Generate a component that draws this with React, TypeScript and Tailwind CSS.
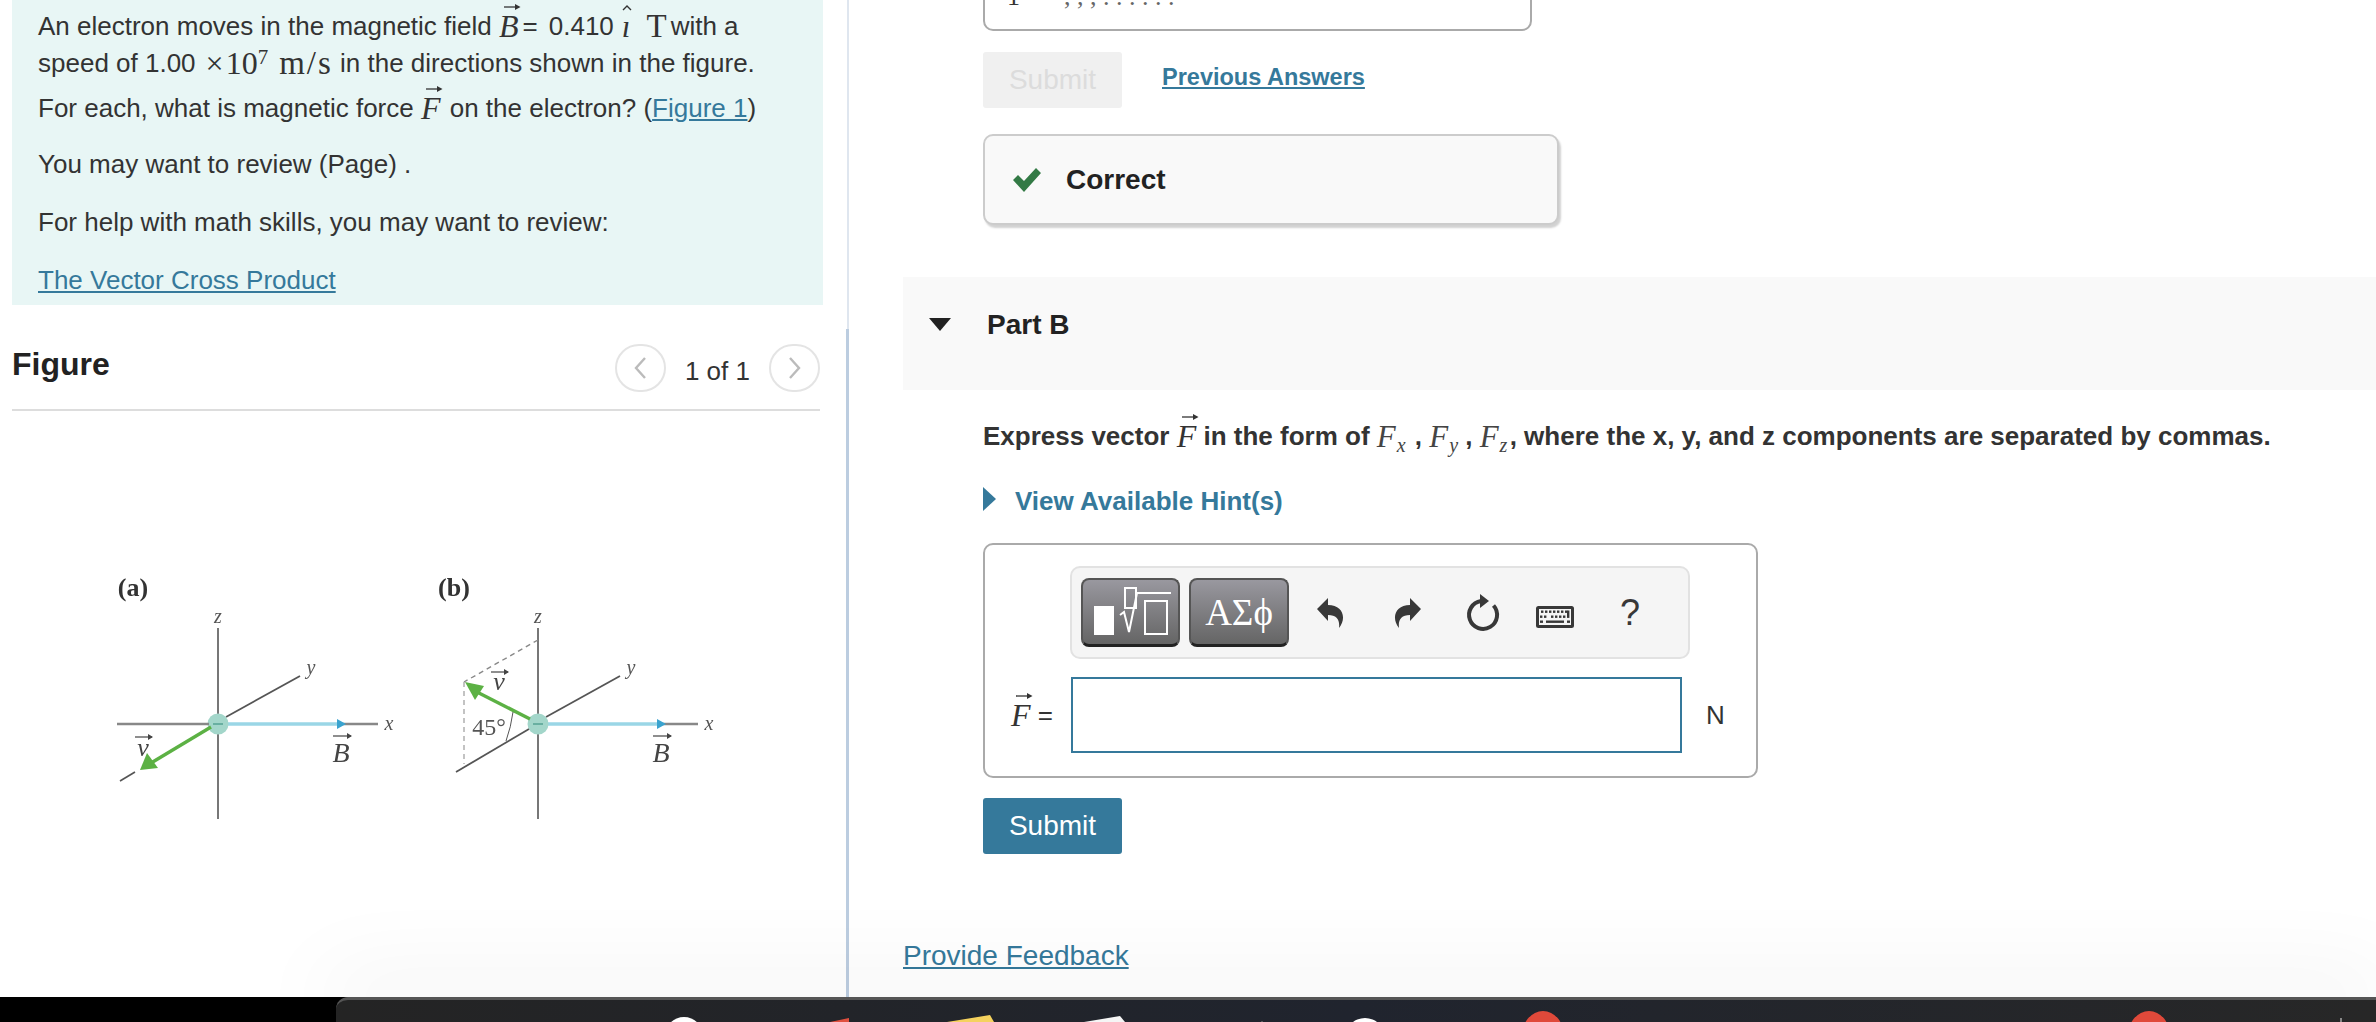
import React from "react";

const serif = "font-['Liberation_Serif',serif]";

const Arrow = ({ className }: { className: string }) => (
  <svg width="17" height="8" viewBox="0 0 17 8" className={`absolute ${className}`}>
    <path d="M0 4 H13" stroke="#333" strokeWidth="1.3" />
    <path d="M11 1 L16.5 4 L11 7 Z" fill="#333" />
  </svg>
);

const Vec = ({ children }: { children: React.ReactNode }) => (
  <span className={`relative inline-block italic ${serif} text-[32px] font-normal leading-none`}>
    {children}
    <Arrow className="left-[5px] top-[-7px]" />
  </span>
);

const Sub = ({ letter, w }: { letter: string; w: string }) => (
  <span className={`${w} inline-block italic font-normal ${serif} text-[31px] leading-none text-[#444]`}>
    F<sub className="ml-[1px] text-[20px]">{letter}</sub>
  </span>
);

const Line = ({ h, children }: { h: string; children: React.ReactNode }) => (
  <div className={`${h} flex items-center whitespace-pre`}>{children}</div>
);

const Scene = ({ dx, left }: { dx: number; left: boolean }) => (
  <g transform={`translate(${dx} 0)`}>
    <line x1="139" y1="79" x2="139" y2="270" stroke="#555" strokeWidth="1.6" />
    <text x="139" y="74" textAnchor="middle" fontFamily="Liberation Serif" fontStyle="italic" fontSize="20" fill="#555">z</text>
    <text x="310" y="181" textAnchor="middle" fontFamily="Liberation Serif" fontStyle="italic" fontSize="20" fill="#555">x</text>
    <text x="232" y="125" textAnchor="middle" fontFamily="Liberation Serif" fontStyle="italic" fontSize="20" fill="#555">y</text>
    <line x1="147" y1="168" x2="221" y2="127" stroke="#555" strokeWidth="1.8" />
    <line x1="262" y1="175" x2="299" y2="175" stroke="#888" strokeWidth="2.4" />
    <line x1="147" y1="175" x2="262" y2="175" stroke="#9ad6e6" strokeWidth="3.4" />
    <polygon points="258,170 267,175 258,180" fill="#3aa3cf" />
    <ellipse cx="139" cy="175" rx="10.5" ry="10.5" fill="#a3d6ca" />
    <line x1="134" y1="175" x2="144" y2="175" stroke="#5aa596" strokeWidth="1.6" />
    <text x="262" y="213" textAnchor="middle" fontFamily="Liberation Serif" fontStyle="italic" fontSize="28" fill="#444">B</text>
    <line x1="254" y1="187" x2="272" y2="187" stroke="#444" strokeWidth="1.2" />
    <polygon points="268,184 273,187 268,190" fill="#444" />
    {left && (
      <>
        <line x1="38" y1="175" x2="130" y2="175" stroke="#888" strokeWidth="2.6" />
        <line x1="132" y1="178" x2="72" y2="214" stroke="#5cb144" strokeWidth="3.4" />
        <polygon points="61,221 68,204 79,219" fill="#5cb144" />
        <line x1="56" y1="223" x2="41" y2="232" stroke="#555" strokeWidth="1.6" />
        <text x="64" y="207" textAnchor="middle" fontFamily="Liberation Serif" fontStyle="italic" fontSize="26" fill="#444">v</text>
        <line x1="56" y1="188" x2="73" y2="188" stroke="#444" strokeWidth="1.2" />
        <polygon points="69,185 74,188 69,191" fill="#444" />
      </>
    )}
    {!left && (
      <>
        <line x1="57" y1="223" x2="130" y2="180" stroke="#555" strokeWidth="1.8" />
        <line x1="139" y1="91" x2="65" y2="133" stroke="#888" strokeWidth="1.4" strokeDasharray="5 4" />
        <line x1="65" y1="133" x2="65" y2="215" stroke="#aaa" strokeWidth="1.4" strokeDasharray="5 4" />
        <line x1="131" y1="170" x2="76" y2="142" stroke="#5cb144" strokeWidth="3.4" />
        <polygon points="66,133 85,137 76,151" fill="#5cb144" />
        <path d="M114 163 Q112 178 107 192" fill="none" stroke="#555" strokeWidth="1" />
        <text x="90" y="186" textAnchor="middle" fontFamily="Liberation Serif" fontSize="24" fill="#555">45°</text>
        <text x="100" y="141" textAnchor="middle" fontFamily="Liberation Serif" fontStyle="italic" fontSize="26" fill="#444">v</text>
        <line x1="92" y1="123" x2="109" y2="123" stroke="#444" strokeWidth="1.2" />
        <polygon points="105,120 110,123 105,126" fill="#444" />
      </>
    )}
  </g>
);

const Figure = () => (
  <svg width="680" height="300" viewBox="0 0 680 300" className="ml-[79px] mt-[138px] blur-[0.5px]">
    <text x="54" y="47" textAnchor="middle" fontFamily="Liberation Serif" fontWeight="bold" fontSize="26" fill="#333">(a)</text>
    <text x="375" y="47" textAnchor="middle" fontFamily="Liberation Serif" fontWeight="bold" fontSize="26" fill="#333">(b)</text>
    <Scene dx={0} left />
    <Scene dx={320} left={false} />
  </svg>
);

const Pager = ({ dir }: { dir: "l" | "r" }) => (
  <span className="flex h-[48px] w-[51px] items-center justify-center rounded-full border-2 border-[#e4e4e4]">
    <svg width="14" height="24" viewBox="0 0 14 24" fill="none" stroke="#bbb" strokeWidth="2.4">
      <path d={dir === "l" ? "M12 2 L3 12 L12 22" : "M2 2 L11 12 L2 22"} />
    </svg>
  </span>
);

const Reply = ({ flip }: { flip?: boolean }) => (
  <svg width="30" height="34" viewBox="0 0 30 34" fill="#383838" className={flip ? "-scale-x-100" : ""}>
    <path d="M2 13 L13 2 L13 9 C28 9 32 22 24 32 C25 24 22 19 13 19 L13 25 Z" />
  </svg>
);

const Keyboard = () => (
  <svg width="40" height="24" viewBox="0 0 40 24">
    <rect x="1" y="1" width="38" height="22" rx="2.5" fill="#383838" />
    <rect x="4" y="4" width="32" height="16" fill="#f5f5f5" />
    {[6, 10, 14, 18, 22, 26, 30].map((x) => (
      <rect key={x} x={x} y="5.5" width="2.4" height="2.4" fill="#383838" />
    ))}
    {[5, 9, 16, 20, 24, 28].map((x) => (
      <rect key={x} x={x} y="10.5" width="2.4" height="2.4" fill="#383838" />
    ))}
    <rect x="32" y="5.5" width="2.4" height="7.4" fill="#383838" />
    <rect x="5" y="15.5" width="3" height="2.4" fill="#383838" />
    <rect x="11" y="15.5" width="18" height="2.4" fill="#383838" />
    <rect x="32" y="15.5" width="3" height="2.4" fill="#383838" />
  </svg>
);

const ToolButton = ({ w, children }: { w: string; children: React.ReactNode }) => (
  <div className={`${w} flex h-[69px] items-center justify-center rounded-[8px] border-2 border-[#555] border-b-[3px] border-b-[#222] bg-gradient-to-b from-[#99989f] to-[#656565]`}>
    {children}
  </div>
);

const Toolbar = () => (
  <div className="flex h-[93px] w-[620px] items-center rounded-[10px] border-2 border-[#e2e2e2] bg-[#f5f5f5] pl-[9px]">
    <ToolButton w="w-[99px]">
      <svg width="80" height="50" viewBox="0 0 80 50" fill="none" stroke="#fff" strokeWidth="2" className="ml-[4px]">
        <rect x="1" y="19" width="20" height="29" fill="#fff" stroke="none" />
        <rect x="32" y="1" width="11" height="20" />
        <path d="M27 28 L31 25 L36 45 L44 6 L78 6" />
        <rect x="52" y="14" width="22" height="33" />
      </svg>
    </ToolButton>
    <div className="ml-[9px]">
      <ToolButton w="w-[100px]">
        <span className={`${serif} text-[37px] leading-none text-white`}>ΑΣϕ</span>
      </ToolButton>
    </div>
    <div className="ml-[26px]"><Reply /></div>
    <div className="ml-[48px]"><Reply flip /></div>
    <svg width="36" height="40" viewBox="0 0 36 40" fill="none" className="ml-[42px]">
      <path d="M28.5 12.5 A14 14 0 1 1 16 8" stroke="#383838" strokeWidth="4" />
      <polygon points="15,1 24,8 15,15" fill="#383838" />
    </svg>
    <div className="ml-[34px] mt-[8px]"><Keyboard /></div>
    <span className="ml-[45px] text-[36px] leading-none text-[#383838]">?</span>
  </div>
);

const SubmitButton = ({ disabled }: { disabled?: boolean }) => (
  <button
    className={`h-[56px] w-[139px] rounded-[3px] text-[28px] ${
      disabled ? "bg-[#f0f0f0] text-[#dcdcdc]" : "bg-[#35799b] text-white"
    }`}
  >
    Submit
  </button>
);

const Dock = () => (
  <div className="absolute bottom-0 left-0 h-[25px] w-full overflow-hidden bg-black">
    <div className="ml-[336px] h-full rounded-tl-[12px] border-t-[3px] border-[#555] bg-gradient-to-r from-[#242424] via-[#20242e] to-[#272727]" />
    <svg className="absolute left-0 top-0" width="2376" height="25" viewBox="0 997 2376 25">
      <circle cx="684" cy="1036" r="19" fill="#fff" />
      <polygon points="830,1022 849,1018 849,1022" fill="#e0503f" />
      <polygon points="947,1022 990,1015 994,1022" fill="#f5d25e" />
      <polygon points="1084,1022 1120,1016 1125,1022" fill="#f5f5f5" />
      <circle cx="1365" cy="1038" r="20" fill="#fff" />
      <line x1="1262" y1="1021" x2="1262" y2="1022" stroke="#888" />
      <ellipse cx="1543" cy="1036" rx="21" ry="25" fill="#e0493a" />
      <ellipse cx="2149" cy="1036" rx="21" ry="25" fill="#e0493a" />
      <line x1="2341" y1="1018" x2="2341" y2="1022" stroke="#888" strokeWidth="2" />
    </svg>
  </div>
);

export default function App() {
  return (
    <div className="relative flex h-[1022px] w-[2376px] overflow-hidden bg-white font-['Liberation_Sans',sans-serif] text-[#333]">
      <div className="w-[846px] shrink-0">
        <div className="ml-3 h-[305px] w-[811px] bg-[#e8f6f5] pl-[26px] pt-[7px] text-[26px]">
          <Line h="h-[38px]">
            An electron moves in the magnetic field <Vec>B</Vec>
            <span className="ml-[4px]">=</span>
            <span className="ml-[11px]">0.410</span>
            <span className={`relative ml-[8px] ${serif} text-[31px] italic leading-none`}>
              ı
              <svg width="10" height="6" viewBox="0 0 10 6" className="absolute left-[0px] top-[-6px]">
                <path d="M1 5 L5 1 L9 5" fill="none" stroke="#333" strokeWidth="1.4" />
              </svg>
            </span>
            <span className={`ml-[16px] ${serif} text-[33px] leading-none`}>T</span>
            <span className="ml-[4px]">with a</span>
          </Line>
          <Line h="h-[36px]">
            speed of 1.00
            <span className={`ml-[10px] ${serif} text-[32px] leading-none`}>×</span>
            <span className={`ml-[2px] ${serif} text-[32px] leading-none`}>
              10<sup className="text-[21px]">7</sup>
            </span>
            <span className={`ml-[11px] ${serif} text-[33px] leading-none tracking-[2px]`}>m/s</span>
            <span> in the directions shown in the figure.</span>
          </Line>
          <Line h="h-[54px]">
            For each, what is magnetic force <Vec>F</Vec>
            <span className="ml-[2px]"> on the electron? (</span>
            <a className="text-[#35799b] underline">Figure 1</a>)
          </Line>
          <Line h="h-[58px]">You may want to review (Page) .</Line>
          <Line h="h-[58px]">For help with math skills, you may want to review:</Line>
          <Line h="h-[58px]">
            <a className="text-[#35799b] underline">The Vector Cross Product</a>
          </Line>
        </div>
        <div className="ml-3 mt-[39px] flex w-[808px] items-center justify-between border-b-2 border-[#ddd] pb-[17px]">
          <h2 className="-mt-[8px] text-[32px] font-bold text-[#222]">Figure</h2>
          <div className="flex items-center">
            <Pager dir="l" />
            <span className="mx-[19px] mt-[6px] text-[26px]">1 of 1</span>
            <Pager dir="r" />
          </div>
        </div>
        <Figure />
      </div>

      <div className="flex h-full w-[3px] shrink-0 flex-col items-center">
        <div className="h-[329px] w-[2px] bg-[#dfe6ef]" />
        <div className="w-[3px] flex-1 bg-[#bccde0]" />
      </div>

      <div className="flex-1 pl-[54px]">
        <div className="ml-[80px]">
          <div className="-mt-[40px] h-[71px] w-[549px] overflow-hidden rounded-[10px] border-2 border-[#aaa] pl-[22px] pt-[22px]">
            <span className={`${serif} text-[26px] leading-[26px] text-[#333]`}>1</span>
            <span className={`${serif} ml-[44px] text-[26px] leading-[26px] text-[#666]`}>, , , . . . . . .</span>
          </div>
          <div className="mt-[21px] flex items-center">
            <SubmitButton disabled />
            <a className="ml-[40px] -mt-[4px] text-[23.5px] font-bold text-[#35799b] underline">Previous Answers</a>
          </div>
          <div className="mt-[26px] flex h-[91px] w-[576px] items-center rounded-[10px] border-2 border-[#ccc] bg-[#f9f9f9] pl-[27px] shadow-[2px_3px_2px_rgba(0,0,0,0.18)]">
            <svg width="30" height="26" viewBox="0 0 30 26">
              <path d="M1 13 L6 8 L12 14 L24 1 L29 6 L12 25 Z" fill="#337a45" />
            </svg>
            <span className="ml-[24px] text-[28px] font-bold text-[#222]">Correct</span>
          </div>
        </div>

        <div className="mt-[52px] flex h-[113px] items-center bg-[#f9f9f9] pb-[18px] pl-[26px]">
          <span className="h-0 w-0 border-x-[11px] border-t-[13px] border-x-transparent border-t-[#222]" />
          <span className="ml-[36px] text-[28px] font-bold text-[#222]">Part B</span>
        </div>

        <div className="ml-[80px]">
          <div className="mt-[21px] flex h-[50px] items-center whitespace-pre text-[26px] font-bold text-[#333]">
            Express vector <Vec>F</Vec>
            <span> in the form of </span>
            <Sub letter="x" w="w-[38px]" />
            <span>, </span>
            <Sub letter="y" w="w-[36px]" />
            <span>, </span>
            <Sub letter="z" w="w-[30px]" />
            <span>, where the x, y, and z components are separated by commas.</span>
          </div>
          <div className="mt-[20px] flex h-[40px] items-center">
            <span className="-mt-[4px] h-0 w-0 border-y-[12px] border-l-[13px] border-y-transparent border-l-[#35799b]" />
            <span className="ml-[19px] text-[26px] font-bold text-[#35799b]">View Available Hint(s)</span>
          </div>
          <div className="mt-[22px] h-[235px] w-[775px] rounded-[10px] border-2 border-[#aaa] pl-[85px] pt-[21px]">
            <Toolbar />
            <div className="-ml-[85px] mt-[18px] flex items-center">
              <div className="flex w-[86px] items-center justify-end whitespace-pre pr-[18px] text-[26px]">
                <Vec>F</Vec>
                <span> =</span>
              </div>
              <div className="h-[76px] w-[611px] border-2 border-[#35799b] bg-white" />
              <span className="ml-[24px] text-[26px]">N</span>
            </div>
          </div>
          <div className="mt-[20px]">
            <SubmitButton />
          </div>
        </div>
        <a className="mt-[81px] block text-[28px] text-[#35799b] underline">Provide Feedback</a>
      </div>

      <div className="absolute bottom-[25px] left-[336px] right-0 h-0 shadow-[0_0_90px_12px_rgba(0,0,0,0.11)]" />
      <Dock />
    </div>
  );
}
